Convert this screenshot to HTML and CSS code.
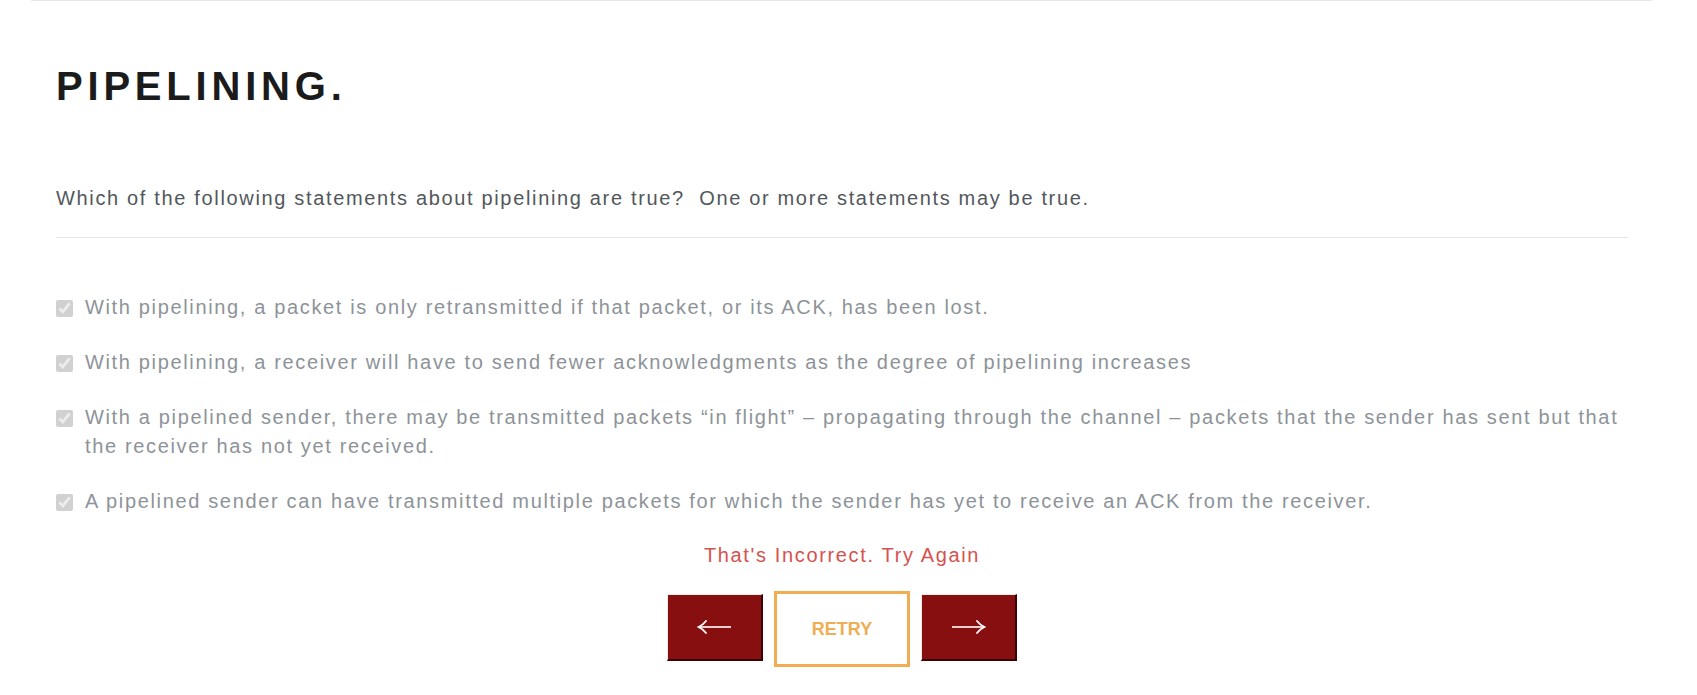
FILE: index.html
```html
<!DOCTYPE html>
<html lang="en">
<head>
    <meta charset="UTF-8">
    <meta name="viewport" content="width=device-width, initial-scale=1.0">
    <title>Pipelining</title>
    <link rel="stylesheet" href="styles.css">
</head>
<body>
    <div class="quiz">
        <h1 class="quiz-title">PIPELINING.</h1>

        <p class="question">Which of the following statements about pipelining are true?&nbsp; One or more statements may be true.</p>

        <ul class="answers">
            <li class="answer">
                <input type="checkbox" checked disabled>
                <span>With pipelining, a packet is only retransmitted if that packet, or its ACK, has been lost.</span>
            </li>
            <li class="answer">
                <input type="checkbox" checked disabled>
                <span>With pipelining, a receiver will have to send fewer acknowledgments as the degree of pipelining increases</span>
            </li>
            <li class="answer">
                <input type="checkbox" checked disabled>
                <span>With a pipelined sender, there may be transmitted packets “in flight” – propagating through the channel – packets that the sender has sent but that the receiver has not yet received.</span>
            </li>
            <li class="answer">
                <input type="checkbox" checked disabled>
                <span>A pipelined sender can have transmitted multiple packets for which the sender has yet to receive an ACK from the receiver.</span>
            </li>
        </ul>

        <p class="feedback">That's Incorrect. Try Again</p>

        <div class="controls">
            <button class="nav-btn" aria-label="Previous">
                <svg class="arrow" width="35" height="14" viewBox="0 0 35 14">
                    <path d="M2 7 H34" stroke="#fff" stroke-width="1.6" fill="none"/>
                    <path d="M9 1 Q6 5 1.5 7 Q6 9 9 13" stroke="#fff" stroke-width="1.8" fill="none" stroke-linecap="round"/>
                </svg>
            </button>
            <button class="retry-btn">RETRY</button>
            <button class="nav-btn" aria-label="Next">
                <svg class="arrow" width="35" height="14" viewBox="0 0 35 14">
                    <path d="M1 7 H33" stroke="#fff" stroke-width="1.6" fill="none"/>
                    <path d="M26 1 Q29 5 33.5 7 Q29 9 26 13" stroke="#fff" stroke-width="1.8" fill="none" stroke-linecap="round"/>
                </svg>
            </button>
        </div>
    </div>
</body>
</html>
```

FILE: styles.css
```css
body {
    margin: 0;
    background: #fff;
    font-family: "Liberation Sans", Arial, sans-serif;
}

.quiz {
    margin: 0 45px 0 31px;
    border-top: 1px solid #e6e6e6;
    padding: 0 24px 40px 25px;
}

.quiz-title {
    margin: 61px 0 0;
    font-size: 40px;
    line-height: 48px;
    font-weight: 700;
    letter-spacing: 4.8px;
    color: #1b1b1b;
}

.question {
    margin: 73px 0 0;
    padding-bottom: 24px;
    border-bottom: 1px solid #e5e5e5;
    font-size: 20px;
    line-height: 30px;
    letter-spacing: 1.66px;
    color: #52575c;
}

.answers {
    list-style-type: none;
    margin: 55px 0 0;
    padding: 0 0 0 2px;
}

.answer {
    display: flex;
    align-items: flex-start;
    margin-bottom: 26px;
    font-size: 20px;
    line-height: 29px;
    letter-spacing: 1.65px;
    color: #8d9398;
}

.answer input {
    flex: none;
    width: 17px;
    height: 17px;
    margin: 7px 12px 0 -2px;
}

.feedback {
    margin: -2px 0 0;
    text-align: center;
    font-size: 20px;
    line-height: 30px;
    letter-spacing: 1.65px;
    color: #d6524e;
}

.controls {
    display: flex;
    justify-content: center;
    align-items: flex-start;
    gap: 11px;
    margin-top: 21px;
}

.nav-btn {
    display: flex;
    align-items: center;
    justify-content: center;
    width: 96px;
    height: 67px;
    margin-top: 3px;
    padding: 0;
    background-color: #870f0f;
    border-style: solid;
    border-width: 1px 2px 2px 1px;
    border-color: #f3e9e9 #3a0303 #3a0303 #f3e9e9;
    cursor: pointer;
}

.arrow {
    display: block;
}

.retry-btn {
    width: 136px;
    height: 76px;
    background: #fff;
    border: 3px solid #f2ad52;
    color: #f2ad52;
    font-family: "Liberation Sans", Arial, sans-serif;
    font-size: 18px;
    font-weight: 700;
    cursor: pointer;
}
```
